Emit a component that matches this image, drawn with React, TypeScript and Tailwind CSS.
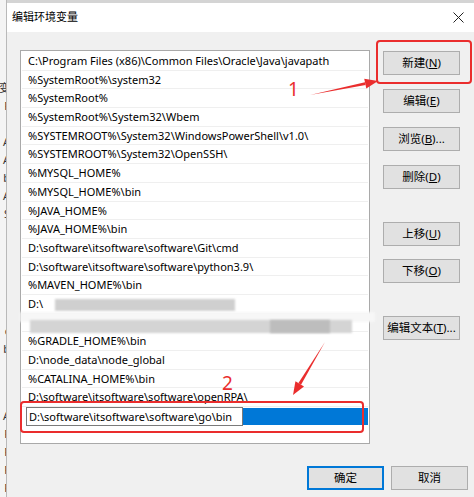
import React from "react";

const paths: string[] = [
  "C:\\Program Files (x86)\\Common Files\\Oracle\\Java\\javapath",
  "%SystemRoot%\\system32",
  "%SystemRoot%",
  "%SystemRoot%\\System32\\Wbem",
  "%SYSTEMROOT%\\System32\\WindowsPowerShell\\v1.0\\",
  "%SYSTEMROOT%\\System32\\OpenSSH\\",
  "%MYSQL_HOME%",
  "%MYSQL_HOME%\\bin",
  "%JAVA_HOME%",
  "%JAVA_HOME%\\bin",
  "D:\\software\\itsoftware\\software\\Git\\cmd",
  "D:\\software\\itsoftware\\software\\python3.9\\",
  "%MAVEN_HOME%\\bin",
  "D:\\",
  "",
  "%GRADLE_HOME%\\bin",
  "D:\\node_data\\node_global",
  "%CATALINA_HOME%\\bin",
  "D:\\software\\itsoftware\\software\\openRPA\\",
];

const font = { fontFamily: '"Noto Sans", "Noto Sans CJK SC", sans-serif' };

// button label with the access key underlined
const Btn = ({ label, k, tail = "" }: { label: string; k: string; tail?: string }) => (
  <button className="w-[77px] h-[24px] bg-[#e1e1e1] border border-[#adadad] text-[11.5px] text-black flex items-center justify-center">
    {label}(<span className="underline">{k}</span>){tail}
  </button>
);

const leftChars = ["", "", "变", "F", "I", "A", "A", "b", "A", "S", "", "", "", "", "", "", "c", "b", "", "", "", "A", "F", "F", "F", "F"];

export default function App() {
  return (
    <div className="w-[474px] h-[497px] relative overflow-hidden bg-[#f0f0f0]" style={font}>
      <div className="flex h-full">
        {/* window behind, mostly hidden */}
        <div className="w-[7px] shrink-0 bg-[#f4f4f4] border-r border-[#b9b9b9] overflow-hidden pt-[46px] flex flex-col items-end">
          {leftChars.map((c, i) => (
            <div key={i} className="h-[18.7px] text-[11px] leading-[18px] text-[#333] -mr-[4px]">
              {c}
            </div>
          ))}
        </div>

        {/* dialog */}
        <div className="flex-1 flex flex-col border-t-[3px] border-[#d4d4d4]">
          <div className="h-[29px] bg-white flex items-center justify-between pl-[5px] pr-[10px]">
            <span className="text-[11px] text-black">编辑环境变量</span>
            <svg width="11" height="11" viewBox="0 0 11 11" className="stroke-[#222]">
              <path d="M0.5 0.5 L10.5 10.5 M10.5 0.5 L0.5 10.5" strokeWidth="1" />
            </svg>
          </div>

          <div className="flex-1 flex flex-col">
            <div className="flex pt-[18px] pl-[13px]">
              {/* path list */}
              <div className="w-[350px] h-[394px] bg-white border border-[#a9a9a9] pt-[1px] px-[1px]">
                {paths.map((p, i) => (
                  <div
                    key={i}
                    className="h-[18.7px] border-b border-[#efefef] pl-[6px] text-[11px] leading-[18px] text-black whitespace-nowrap overflow-hidden"
                  >
                    {p}
                  </div>
                ))}
                <div className="h-[19px] flex pl-[4px]">
                  <div className="w-[217px] h-full border border-[#7a7a7a] bg-white text-[11px] leading-[17px] pl-[2px] text-black whitespace-nowrap">
                    D:\software\itsoftware\software\go\bin
                  </div>
                  <div className="flex-1 bg-[#0078d7] my-[1px]" />
                </div>
              </div>

              {/* side buttons */}
              <div className="ml-[13px] flex flex-col pt-[1px]">
                <Btn label="新建" k="N" />
                <div className="h-[14px]" />
                <Btn label="编辑" k="E" />
                <div className="h-[14px]" />
                <Btn label="浏览" k="B" tail="..." />
                <div className="h-[14px]" />
                <Btn label="删除" k="D" />
                <div className="h-[33px]" />
                <Btn label="上移" k="U" />
                <div className="h-[13px]" />
                <Btn label="下移" k="O" />
                <div className="h-[33px]" />
                <Btn label="编辑文本" k="T" tail="..." />
              </div>
            </div>

            <div className="flex justify-end gap-[7px] pr-[6px] mt-[22px]">
              <button className="w-[77px] h-[24px] bg-[#e1e1e1] border-2 border-[#0078d7] text-[11.5px] text-black">确定</button>
              <button className="w-[77px] h-[24px] bg-[#e1e1e1] border border-[#adadad] text-[11.5px] text-black">取消</button>
            </div>
          </div>
        </div>
      </div>

      {/* blurred (redacted) rows */}
      <div className="absolute left-[55px] top-[299px] w-[180px] h-[12px] bg-[#cfcfcf] blur-[1px]" />
      <div className="absolute left-[20px] top-[312px] w-[355px] h-[10px] bg-[#f7f7f7] blur-[1px]" />
      <div className="absolute left-[30px] top-[320px] w-[322px] h-[13px] bg-[#d4d4d4] blur-[1px]" />
      <div className="absolute left-[270px] top-[320px] w-[60px] h-[13px] bg-[#bdbdbd] blur-[1px]" />

      {/* annotations */}
      <svg className="absolute inset-0 pointer-events-none" width="474" height="497">
        <rect x="377" y="41" width="94" height="42" rx="3" fill="none" stroke="#ea2d2d" strokeWidth="2" />
        <rect x="21" y="402" width="342" height="30" rx="3" fill="none" stroke="#ea2d2d" strokeWidth="2" />
        <polygon points="310,95 365.56,85.09 364.96,82.15" fill="#ea2d2d" />
        <polygon points="378,81 366.27,88.52 364.25,78.72" fill="#ea2d2d" />
        <polygon points="325,342 301,384.65 298.44,383.09" fill="#ea2d2d" />
        <polygon points="293,395 304,386.45 295.44,381.29" fill="#ea2d2d" />
      </svg>
      <span className="absolute left-[288px] top-[81px] text-[19px] leading-[16px] text-[#ea2d2d]">1</span>
      <span className="absolute left-[222px] top-[375px] text-[19px] leading-[16px] text-[#ea2d2d]">2</span>
    </div>
  );
}
